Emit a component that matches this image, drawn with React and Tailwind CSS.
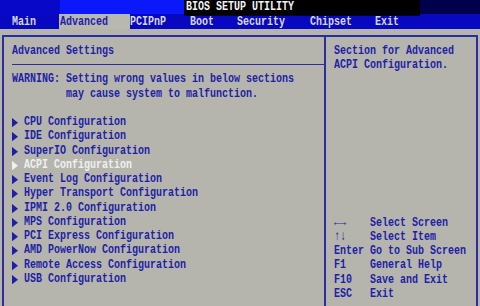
import React from "react";

const menus = [
  { label: "Main", x: "w-[48px]" },
  { label: "Advanced", x: "w-[71px]", active: true },
  { label: "PCIPnP", x: "w-[60px]" },
  { label: "Boot", x: "w-[47px]" },
  { label: "Security", x: "w-[73px]" },
  { label: "Chipset", x: "w-[65px]" },
  { label: "Exit", x: "w-[60px]" },
];

const items = [
  "CPU Configuration",
  "IDE Configuration",
  "SuperIO Configuration",
  "ACPI Configuration",
  "Event Log Configuration",
  "Hyper Transport Configuration",
  "IPMI 2.0 Configuration",
  "MPS Configuration",
  "PCI Express Configuration",
  "AMD PowerNow Configuration",
  "Remote Access Configuration",
  "USB Configuration",
];

const keys = [
  ["←→", "Select Screen"],
  ["↑↓", "Select Item"],
  ["Enter", "Go to Sub Screen"],
  ["F1", "General Help"],
  ["F10", "Save and Exit"],
  ["ESC", "Exit"],
];

function Line({ children, className = "" }) {
  return (
    <div className={`h-[14.25px] leading-[14.25px] whitespace-pre scale-y-135 ${className}`}>
      {children}
    </div>
  );
}

function Arrow() {
  return (
    <span className="inline-flex w-[12px] h-[14px] items-center align-top">
      <svg width="6" height="7" viewBox="0 0 6 7" className="fill-current">
        <path d="M0 0 L6 3.5 L0 7 Z" />
      </svg>
    </span>
  );
}

export default function App() {
  return (
    <div
      className="w-[480px] h-[306px] overflow-hidden bg-[#b5b5ad] text-[10px] font-bold text-[#1e1ea6]"
      style={{ fontFamily: '"Liberation Mono", "DejaVu Sans Mono", monospace' }}
    >
      {/* title bar */}
      <div className="flex h-[14px]">
        <div className="w-[60px] bg-[#0808c8]" />
        <div className="w-[124px] bg-[#0a18fa]" />
        <div className="w-[236px] bg-black text-[#f4f4f4] pl-[2px] leading-[14px] scale-y-125">
          BIOS SETUP UTILITY
        </div>
        <div className="flex-1 bg-[#00004c]" />
      </div>

      {/* menu bar */}
      <div className="flex h-[15px] bg-[#0808c0] pl-[12px] text-[#d6d6e4]">
        {menus.map((m) => (
          <div
            key={m.label}
            className={`${m.x} leading-[15px] ${m.active ? "-ml-[1px] pl-[1px] bg-[#b8b8b0] text-[#1e1ea6]" : ""}`}
          >
            <span className="inline-block scale-y-130">{m.label}</span>
          </div>
        ))}
      </div>

      {/* body */}
      <div className="pt-[6px] px-[2px]">
        <div className="flex h-[300px] border-2 border-b-0 border-[#2c2c9c]">
          <div className="w-[322px] border-r-2 border-[#2c2c9c] pl-[8px] pt-[7px]">
            <Line>Advanced Settings</Line>
            <div className="h-px bg-[#2c2c9c] mt-[6px] mb-[7px]" />
            <Line>WARNING: Setting wrong values in below sections</Line>
            <Line>{"         may cause system to malfunction."}</Line>
            <Line />
            {items.map((t) => (
              <Line key={t} className={t === "ACPI Configuration" ? "text-[#f0f0f0]" : ""}>
                <Arrow />
                {t}
              </Line>
            ))}
          </div>
          <div className="flex-1 pl-[8px] pt-[7px]">
            <Line>Section for Advanced</Line>
            <Line>ACPI Configuration.</Line>
            <div className="mt-[143px]">
              {keys.map(([k, d]) => (
                <Line key={k} className="flex">
                  <span className="w-[36px]">{k}</span>
                  <span>{d}</span>
                </Line>
              ))}
            </div>
          </div>
        </div>
      </div>
    </div>
  );
}
